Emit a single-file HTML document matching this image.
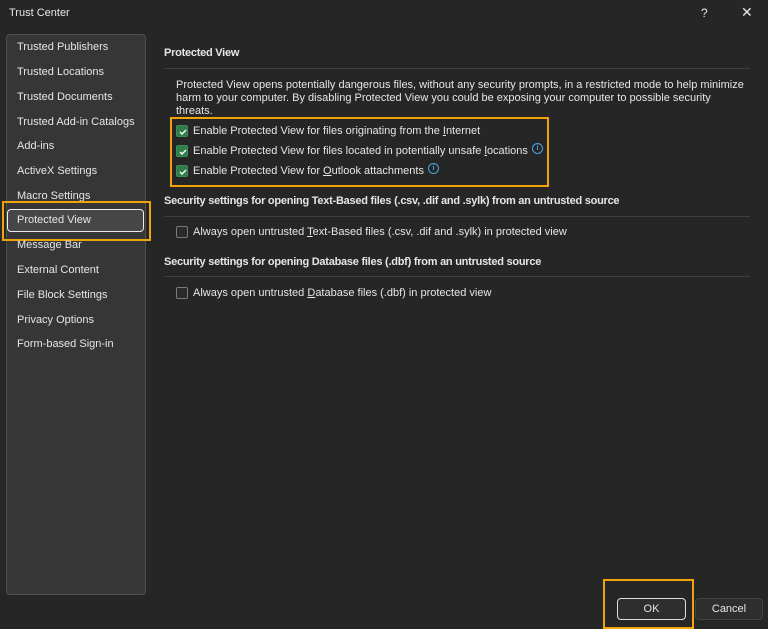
<!DOCTYPE html>
<html><head><style>
*{margin:0;padding:0;box-sizing:border-box}
body{width:768px;height:626px;background:#262626;color:#e6e6e6;font-family:"Liberation Sans",sans-serif;font-size:11px;letter-spacing:0;position:relative;overflow:hidden}
.a{position:absolute;white-space:nowrap;line-height:13px}
.side{position:absolute;left:6px;top:34px;width:140px;height:561px;background:#363636;border:1px solid #505050;border-radius:4px}
.b{font-weight:bold;letter-spacing:-0.25px}
.line{position:absolute;height:1px;background:#3e3e3e;left:164px;width:586px}
.cb{position:absolute;width:12px;height:12px;border-radius:2px}
.on{background:#2e7d4a;border:1px solid #3a8f58}
.on svg{position:absolute;left:1px;top:1px}
.off{border:1px solid #7a7a7a;background:#2a2a2a}
.org{position:absolute;border:2px solid #f0a30a}
.info{display:inline-block;vertical-align:top;margin-left:4px;margin-top:-2px;width:11px;height:11px;border:1px solid #4aa3e0;border-radius:50%;color:#4aa3e0;font-size:7px;line-height:9px;text-align:center;font-weight:bold}
u{text-decoration:underline}
.btn{position:absolute;height:22px;border-radius:4px;text-align:center;line-height:20px;font-size:11px}
</style></head><body>
<div class="a" style="left:9px;top:7px;font-size:11px">Trust Center</div>
<div class="a" style="left:701px;top:7px;font-size:12px">?</div>
<div class="a" style="left:741px;top:6px;font-size:14px">✕</div>
<div class="side"></div>
<div class="a" style="left:17px;top:41px">Trusted Publishers</div>
<div class="a" style="left:17px;top:66px">Trusted Locations</div>
<div class="a" style="left:17px;top:91px">Trusted Documents</div>
<div class="a" style="left:17px;top:116px">Trusted Add-in Catalogs</div>
<div class="a" style="left:17px;top:140px">Add-ins</div>
<div class="a" style="left:17px;top:165px">ActiveX Settings</div>
<div class="a" style="left:17px;top:190px">Macro Settings</div>
<div style="position:absolute;left:7px;top:209px;width:137px;height:23px;background:#474747;border:1.5px solid #eee;border-radius:4px"></div>
<div class="a" style="left:17px;top:214px">Protected View</div>
<div class="org" style="left:2px;top:201px;width:149px;height:40px"></div>
<div class="a" style="left:17px;top:239px">Message Bar</div>
<div class="a" style="left:17px;top:264px">External Content</div>
<div class="a" style="left:17px;top:289px">File Block Settings</div>
<div class="a" style="left:17px;top:314px">Privacy Options</div>
<div class="a" style="left:17px;top:338px">Form-based Sign-in</div>

<div class="a b" style="left:164px;top:47px">Protected View</div>
<div class="line" style="top:68px"></div>
<div class="a" style="left:176px;top:79px">Protected View opens potentially dangerous files, without any security prompts, in a restricted mode to help minimize</div>
<div class="a" style="left:176px;top:92px">harm to your computer. By disabling Protected View you could be exposing your computer to possible security</div>
<div class="a" style="left:176px;top:105px;height:12px;overflow:hidden">threats.</div>
<div class="org" style="left:170px;top:117px;width:379px;height:70px;background:#262626"></div>
<div class="cb on" style="left:176px;top:125px"><svg width="10" height="10"><path d="M2 5l2 2 4-4" stroke="#fff" stroke-width="1.4" fill="none"/></svg></div>
<div class="a" style="left:193px;top:125px">Enable Protected View for files originating from the <u>I</u>nternet</div>
<div class="cb on" style="left:176px;top:145px"><svg width="10" height="10"><path d="M2 5l2 2 4-4" stroke="#fff" stroke-width="1.4" fill="none"/></svg></div>
<div class="a" style="left:193px;top:145px">Enable Protected View for files located in potentially unsafe <u>l</u>ocations<span class="info">i</span></div>
<div class="cb on" style="left:176px;top:165px"><svg width="10" height="10"><path d="M2 5l2 2 4-4" stroke="#fff" stroke-width="1.4" fill="none"/></svg></div>
<div class="a" style="left:193px;top:165px">Enable Protected View for <u>O</u>utlook attachments<span class="info">i</span></div>

<div class="a b" style="left:164px;top:195px">Security settings for opening Text-Based files (.csv, .dif and .sylk) from an untrusted source</div>
<div class="line" style="top:216px"></div>
<div class="cb off" style="left:176px;top:226px"></div>
<div class="a" style="left:193px;top:226px">Always open untrusted <u>T</u>ext-Based files (.csv, .dif and .sylk) in protected view</div>
<div class="a b" style="left:164px;top:256px">Security settings for opening Database files (.dbf) from an untrusted source</div>
<div class="line" style="top:276px"></div>
<div class="cb off" style="left:176px;top:287px"></div>
<div class="a" style="left:193px;top:287px">Always open untrusted <u>D</u>atabase files (.dbf) in protected view</div>

<div class="org" style="left:603px;top:579px;width:91px;height:50px"></div>
<div class="btn" style="left:617px;top:598px;width:69px;background:#2e2e2e;border:1.5px solid #ddd">OK</div>
<div class="btn" style="left:695px;top:598px;width:68px;background:#2e2e2e;border:1px solid #444">Cancel</div>
</body></html>
